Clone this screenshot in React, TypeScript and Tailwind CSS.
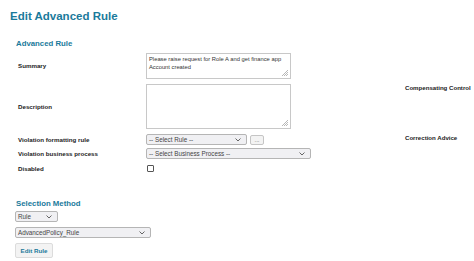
import React from 'react';

const teal = 'text-[#1b7a9b]';

const Chevron: React.FC = () => (
  <svg width="6" height="4" viewBox="0 0 6 4" className="shrink-0">
    <path d="M0.5 0.5 L3 3 L5.5 0.5" fill="none" stroke="#555" strokeWidth="0.9" />
  </svg>
);

const Select: React.FC<{ label: string; className: string }> = ({ label, className }) => (
  <div
    className={`flex items-center justify-between rounded-[2px] border border-[#b5b5b5] bg-[#f0f0f3] pl-[2px] pr-[5px] text-[6.3px] text-[#444] ${className}`}
  >
    <span>{label}</span>
    <Chevron />
  </div>
);

const Grip: React.FC = () => (
  <svg width="6" height="6" viewBox="0 0 6 6" className="absolute bottom-[2px] right-[2px]">
    <path d="M6 0 L0 6 M6 2 L2 6 M6 4 L4 6" stroke="#888" strokeWidth="0.6" />
  </svg>
);

const Label: React.FC<{ children: React.ReactNode }> = ({ children }) => (
  <div className="w-[146px] shrink-0 pl-[18px] text-[6.2px] font-bold text-[#222]">{children}</div>
);

export default function App() {
  return (
    <div className="h-[261px] w-[474px] overflow-hidden bg-white font-['Liberation_Sans',Arial,sans-serif]">
      <h1 className={`pl-[10px] pt-[9px] text-[11.5px] font-bold leading-[14px] ${teal}`}>Edit Advanced Rule</h1>

      <h2 className={`mt-[16px] pl-[16px] text-[7.8px] font-bold leading-[10px] ${teal}`}>Advanced Rule</h2>

      <div className="mt-[4px] flex">
        <div className="flex flex-col">
          <div className="flex items-center">
            <Label>Summary</Label>
            <div className="relative h-[26px] w-[145px] border border-[#c8c8c8] px-[2px] py-[1px] text-[5.8px] leading-[8px] text-[#333]">
              Please raise request for Role A and get finance app Account created
              <Grip />
            </div>
          </div>

          <div className="mt-[5px] flex items-center">
            <Label>Description</Label>
            <div className="relative h-[45px] w-[145px] border border-[#c8c8c8]">
              <Grip />
            </div>
          </div>

          <div className="mt-[5px] flex items-center">
            <Label>Violation formatting rule</Label>
            <Select label="-- Select Rule --" className="h-[11px] w-[101px]" />
            <div className="ml-[3px] flex h-[10px] w-[14px] items-center justify-center rounded-[2px] border border-[#c5c5c5] bg-[#f3f3f3] text-[6px] leading-none text-[#666]">
              ...
            </div>
          </div>

          <div className="mt-[3px] flex items-center">
            <Label>Violation business process</Label>
            <Select label="-- Select Business Process --" className="h-[11px] w-[165px]" />
          </div>

          <div className="mt-[5px] flex items-center">
            <Label>Disabled</Label>
            <div className="ml-[1px] h-[7px] w-[7px] rounded-[1px] border border-[#555] bg-white" />
          </div>
        </div>

        <div className="ml-[94px] flex flex-col pt-[31px] text-[6.1px] font-bold leading-[8px] text-[#222]">
          <span className="whitespace-nowrap">Compensating Control</span>
          <span className="mt-[42px] whitespace-nowrap">Correction Advice</span>
        </div>
      </div>

      <h2 className={`mt-[26px] pl-[16px] text-[7.8px] font-bold leading-[10px] ${teal}`}>Selection Method</h2>

      <div className="mt-[2px] flex flex-col gap-[5px] pl-[15px]">
        <Select label="Rule" className="h-[11px] w-[43px]" />
        <Select label="AdvancedPolicy_Rule" className="h-[11px] w-[136px]" />
        <div
          className={`flex h-[15px] w-[38px] items-center justify-center rounded-[2px] border border-[#dcdcdc] bg-[#f3f3f3] text-[6.2px] font-bold ${teal}`}
        >
          Edit Rule
        </div>
      </div>
    </div>
  );
}
